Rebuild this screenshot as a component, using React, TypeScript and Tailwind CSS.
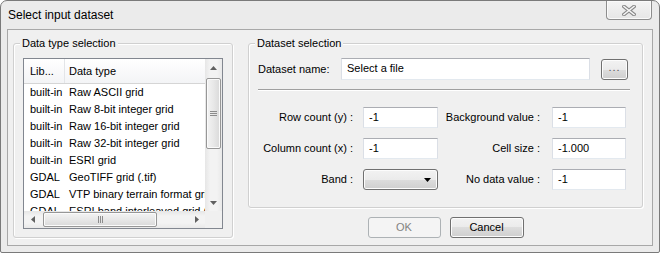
import React from 'react';

const FONT = "font-['Liberation_Sans',Arial,sans-serif]";

const ROWS: [string, string][] = [
  ['built-in', 'Raw ASCII grid'],
  ['built-in', 'Raw 8-bit integer grid'],
  ['built-in', 'Raw 16-bit integer grid'],
  ['built-in', 'Raw 32-bit integer grid'],
  ['built-in', 'ESRI grid'],
  ['GDAL', 'GeoTIFF grid (.tif)'],
  ['GDAL', 'VTP binary terrain format grid (.bt)'],
  ['GDAL', 'ESRI band interleaved grid (.bil)'],
];

function Arrow({ dir }: { dir: 'up' | 'down' | 'left' | 'right' }) {
  const pts = {
    up: '0,4 3.5,0 7,4',
    down: '0,0 7,0 3.5,4',
    left: '4,0 4,7 0,3.5',
    right: '0,0 0,7 4,3.5',
  }[dir];
  const vertical = dir === 'up' || dir === 'down';
  return (
    <svg width={vertical ? 7 : 4} height={vertical ? 4 : 7} viewBox={vertical ? '0 0 7 4' : '0 0 4 7'}>
      <polygon points={pts} fill="#606060" />
    </svg>
  );
}

function Field({ value, w }: { value: string; w: string }) {
  return (
    <div className={`${w} h-[21px] border border-[#abadb3] border-x-[#dbdfe6] border-b-[#e3e9ef] bg-white px-[5px] text-[11px] leading-[19px] text-black whitespace-nowrap`}>
      {value}
    </div>
  );
}

function Group({ title, className, children }: { title: string; className: string; children: React.ReactNode }) {
  return (
    <div className={`relative rounded-[3px] border border-[#d0d0d0] shadow-[inset_1px_1px_0_#ffffff,1px_1px_0_#ffffff] ${className}`}>
      <span className="absolute left-[6px] top-[-9px] bg-[#f0f0f0] px-[2px] text-[11px] leading-[16px] whitespace-nowrap text-black">{title}</span>
      {children}
    </div>
  );
}

const BTN = 'rounded-[3px] border border-[#707070] bg-[linear-gradient(#f2f2f2_0%,#ebebeb_50%,#dddddd_50%,#cfcfcf_100%)] shadow-[inset_0_0_0_1px_#fcfcfc]';

export default function App() {
  return (
    <div className={`${FONT} flex h-[253px] w-[660px] flex-col overflow-hidden rounded-t-[7px] rounded-b-[2px] border border-[#7a7a7a] bg-[#ebebeb] text-black`}>
      {/* Title bar */}
      <div className="flex h-[28px] shrink-0 items-start">
        <span className="pl-[7px] pt-[6px] text-[12px] leading-[16px]">Select input dataset</span>
        <div className="ml-auto mr-[7px] flex h-[19px] w-[46px] items-center justify-center rounded-b-[4px] border border-t-0 border-[#8d8d8d] bg-[linear-gradient(#f4f4f4,#e6e6e6)] shadow-[inset_0_0_0_1px_#fafafa]">
          <svg width="14" height="11" viewBox="0 0 14 11">
            <path d="M2 1.5 L12 9.5 M12 1.5 L2 9.5" stroke="#8a8a8a" strokeWidth="3.6" strokeLinecap="square" />
            <path d="M2 1.5 L12 9.5 M12 1.5 L2 9.5" stroke="#f6f6f6" strokeWidth="1.6" strokeLinecap="square" />
          </svg>
        </div>
      </div>

      {/* Client area */}
      <div className="mx-[6px] flex h-[217px] shrink-0 border border-[#a8a8a8] bg-[#f0f0f0] pl-[5px] pt-[13px]">
        <Group title="Data type selection" className="h-[195px] w-[220px] shrink-0">
          {/* List view */}
          <div className="ml-[9px] mt-[14px] flex h-[171px] w-[200px] flex-col border border-[#828790] bg-white">
            <div className="flex h-[152px]">
              <div className="w-[181px] overflow-hidden">
                <div className="flex h-[25px] items-center border-b border-[#d5d5d5] bg-[linear-gradient(#ffffff,#f3f4f6)] text-[11px]">
                  <div className="flex h-full w-[41px] items-center border-r border-[#e3e5e8] pl-[6px]">Lib...</div>
                  <div className="pl-[4px] whitespace-nowrap">Data type</div>
                </div>
                {ROWS.map(([lib, type]) => (
                  <div key={type} className="flex h-[17px] items-center text-[11px] whitespace-nowrap">
                    <div className="w-[41px] shrink-0 pl-[6px]">{lib}</div>
                    <div className="pl-[4px]">{type}</div>
                  </div>
                ))}
              </div>
              {/* vertical scrollbar */}
              <div className="flex w-[17px] flex-col items-center bg-[linear-gradient(90deg,#e6e6e6,#f3f3f3_30%,#f3f3f3_70%,#e9e9e9)]">
                <div className="flex h-[17px] items-center justify-center"><Arrow dir="up" /></div>
                <div className="mt-[2px] flex h-[71px] w-[15px] flex-col items-center justify-center gap-[1px] rounded-[2px] border border-[#979797] bg-[linear-gradient(90deg,#f3f3f3,#e8e8e8_50%,#d9d9d9)] shadow-[inset_0_0_0_1px_#fbfbfb]">
                  <div className="h-px w-[7px] bg-[#8c8c8c]" />
                  <div className="h-px w-[7px] bg-[#8c8c8c]" />
                  <div className="h-px w-[7px] bg-[#8c8c8c]" />
                </div>
                <div className="flex-1" />
                <div className="flex h-[17px] items-center justify-center"><Arrow dir="down" /></div>
              </div>
            </div>
            <div className="flex h-[17px]">
              {/* horizontal scrollbar */}
              <div className="flex w-[181px] items-center bg-[linear-gradient(#e6e6e6,#f3f3f3_30%,#f3f3f3_70%,#e9e9e9)]">
                <div className="flex w-[17px] justify-center"><Arrow dir="left" /></div>
                <div className="ml-[2px] flex h-[15px] w-[114px] items-center justify-center gap-[1px] rounded-[2px] border border-[#979797] bg-[linear-gradient(#f3f3f3,#e8e8e8_50%,#d9d9d9)] shadow-[inset_0_0_0_1px_#fbfbfb]">
                  <div className="h-[7px] w-px bg-[#8c8c8c]" />
                  <div className="h-[7px] w-px bg-[#8c8c8c]" />
                  <div className="h-[7px] w-px bg-[#8c8c8c]" />
                </div>
                <div className="flex-1" />
                <div className="flex w-[17px] justify-center"><Arrow dir="right" /></div>
              </div>
              <div className="w-[17px] bg-[#f0f0f0]" />
            </div>
          </div>
        </Group>

        <div className="ml-[15px] flex flex-col">
          <Group title="Dataset selection" className="h-[165px] w-[395px]">
            <div className="mt-[14px] flex items-center pl-[9px] text-[11px] whitespace-nowrap">
              <span className="w-[83px]">Dataset name:</span>
              <Field value="Select a file" w="w-[249px] h-[22px]" />
              <div className={`ml-[11px] flex h-[21px] w-[27px] items-center justify-center pb-[3px] text-[11px] leading-none tracking-[1px] text-[#555] ${BTN}`}>...</div>
            </div>
            <div className="ml-[9px] mt-[9px] h-[2px] w-[372px] border-t border-[#a0a0a0] border-b border-b-white" />
            <div className="mt-[16px] flex flex-col gap-[10px] pl-[9px] text-[11px] whitespace-nowrap">
              <div className="flex items-center">
                <span className="w-[95px] text-right">Row count (y) :</span>
                <div className="ml-[10px]"><Field value="-1" w="w-[75px]" /></div>
                <span className="w-[102px] text-right">Background value :</span>
                <div className="ml-[12px]"><Field value="-1" w="w-[74px]" /></div>
              </div>
              <div className="flex items-center">
                <span className="w-[95px] text-right">Column count (x) :</span>
                <div className="ml-[10px]"><Field value="-1" w="w-[75px]" /></div>
                <span className="w-[102px] text-right">Cell size :</span>
                <div className="ml-[12px]"><Field value="-1.000" w="w-[74px]" /></div>
              </div>
              <div className="flex items-center">
                <span className="w-[95px] text-right">Band :</span>
                <div className={`ml-[10px] flex h-[21px] w-[75px] items-center justify-end pr-[6px] ${BTN}`}>
                  <svg width="7" height="4" viewBox="0 0 7 4"><polygon points="0,0 7,0 3.5,4" fill="#000" /></svg>
                </div>
                <span className="w-[102px] text-right">No data value :</span>
                <div className="ml-[12px]"><Field value="-1" w="w-[74px]" /></div>
              </div>
            </div>
          </Group>
          <div className="mt-[9px] flex justify-center gap-[9px] text-[11px]">
            <div className="flex h-[21px] w-[73px] items-center justify-center rounded-[3px] border border-[#adb2b5] bg-[#f4f4f4] text-[#838383]">OK</div>
            <div className={`flex h-[21px] w-[74px] items-center justify-center ${BTN}`}>Cancel</div>
          </div>
        </div>
      </div>
    </div>
  );
}
